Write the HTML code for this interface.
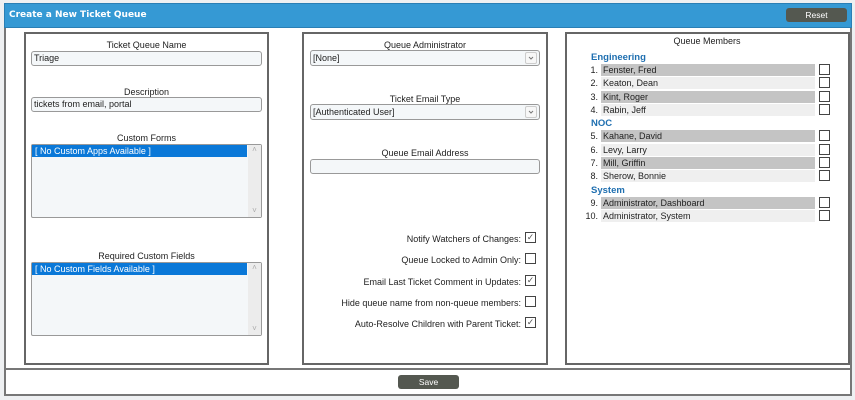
<!DOCTYPE html>
<html><head><style>
*{box-sizing:border-box;margin:0;padding:0}
body{width:855px;height:400px;background:#eef0f2;font-family:"Liberation Sans",sans-serif;font-size:9px;color:#222;position:relative;overflow:hidden}
.a{position:absolute}
#outer{left:4px;top:3px;width:848px;height:393px;border:2px solid #777;background:#fff}
#title{left:4px;top:3px;width:848px;height:25px;background:#3599d4;border:1px solid #2a7fb5}
#title span{position:absolute;left:4px;top:6px;color:#fff;font-weight:bold;font-size:9px;font-family:"DejaVu Sans",sans-serif}
.btn{background:#545850;color:#fff;border-radius:3px;text-align:center;font-size:8.5px;line-height:14px}
.panel{border:2px solid #666;background:#fff}
.lbl{text-align:center;font-size:9px}
.inp{border:1px solid #999;border-radius:3px;background:#f4f7f9;padding-left:2px;line-height:12px;font-size:9px}
.list{border:1px solid #999;border-radius:2px;background:#f4f7f9}
.sel{background:#0a78d8;color:#fff;padding-left:3px;line-height:12px}
.sb{position:absolute;right:0;top:0;bottom:0;width:13px;background:#ececec;color:#aaa;font-size:8px;text-align:center}
.cb{width:11px;height:11px;border:1px solid #444;background:#fff}
.chk{font-size:9px;text-align:right}
.grp{color:#1f6fb0;font-weight:bold;font-size:9.5px}
.row{height:12px;line-height:12px}
.num{text-align:right;width:30px}
.dd{position:absolute;right:2px;top:1px;width:12px;height:12px;border:1px solid #ccc;border-radius:2px;background:#f7f7f7}
</style></head><body>
<div id="outer" class="a"></div>
<div id="title" class="a"><span>Create a New Ticket Queue</span></div>
<div class="a btn" style="left:786px;top:8px;width:61px;height:14px">Reset</div>
<div class="a" style="left:5px;top:368px;width:846px;height:2px;background:#777"></div>
<div class="a btn" style="left:398px;top:375px;width:61px;height:14px">Save</div>

<div class="a panel" style="left:24px;top:32px;width:245px;height:333px"></div>
<div class="a lbl" style="left:31px;top:40px;width:231px">Ticket Queue Name</div>
<div class="a inp" style="left:31px;top:51px;width:231px;height:15px">Triage</div>
<div class="a lbl" style="left:31px;top:87px;width:231px">Description</div>
<div class="a inp" style="left:31px;top:97px;width:231px;height:15px">tickets from email, portal</div>
<div class="a lbl" style="left:31px;top:133px;width:231px">Custom Forms</div>
<div class="a list" style="left:31px;top:144px;width:231px;height:74px"><div class="sel" style="margin-right:14px">[ No Custom Apps Available ]</div><div class="sb">˄<div style="position:absolute;bottom:2px;width:13px">˅</div></div></div>
<div class="a lbl" style="left:31px;top:251px;width:231px">Required Custom Fields</div>
<div class="a list" style="left:31px;top:262px;width:231px;height:74px"><div class="sel" style="margin-right:14px">[ No Custom Fields Available ]</div><div class="sb">˄<div style="position:absolute;bottom:2px;width:13px">˅</div></div></div>

<div class="a panel" style="left:302px;top:32px;width:246px;height:333px"></div>
<div class="a lbl" style="left:310px;top:40px;width:230px">Queue Administrator</div>
<div class="a inp" style="left:310px;top:50px;width:230px;height:16px;line-height:14px">[None]<div class="dd"><svg width="10" height="10" style="position:absolute;left:0;top:0"><path d="M3 4l2 2 2-2" stroke="#777" fill="none"/></svg></div></div>
<div class="a lbl" style="left:310px;top:94px;width:230px">Ticket Email Type</div>
<div class="a inp" style="left:310px;top:104px;width:230px;height:16px;line-height:14px">[Authenticated User]<div class="dd"><svg width="10" height="10" style="position:absolute;left:0;top:0"><path d="M3 4l2 2 2-2" stroke="#777" fill="none"/></svg></div></div>
<div class="a lbl" style="left:310px;top:148px;width:230px">Queue Email Address</div>
<div class="a inp" style="left:310px;top:159px;width:230px;height:15px"></div>
<div class="a chk" style="left:310px;top:234px;width:211px">Notify Watchers of Changes:</div><div class="a cb" style="left:525px;top:232px;font-size:9px;line-height:9px;text-align:center;color:#555">✓</div>
<div class="a chk" style="left:310px;top:255px;width:211px">Queue Locked to Admin Only:</div><div class="a cb" style="left:525px;top:253px"></div>
<div class="a chk" style="left:310px;top:277px;width:211px">Email Last Ticket Comment in Updates:</div><div class="a cb" style="left:525px;top:275px;font-size:9px;line-height:9px;text-align:center;color:#555">✓</div>
<div class="a chk" style="left:310px;top:298px;width:211px">Hide queue name from non-queue members:</div><div class="a cb" style="left:525px;top:296px"></div>
<div class="a chk" style="left:310px;top:319px;width:211px">Auto-Resolve Children with Parent Ticket:</div><div class="a cb" style="left:525px;top:317px;font-size:9px;line-height:9px;text-align:center;color:#555">✓</div>

<div class="a panel" style="left:565px;top:32px;width:285px;height:333px"></div>
<div class="a lbl" style="left:567px;top:36px;width:280px">Queue Members</div>
<div class="a" style="left:568px;top:52px;width:270px;line-height:13.3px">
<div class="grp" style="margin-left:23px;height:12px;line-height:12px">Engineering</div>
<div class="row" style="display:flex;height:13.3px"><div class="num">1.</div><div style="margin-left:3px;width:214px;background:#c4c4c4;padding-left:2px;height:12px">Fenster, Fred</div><div class="cb" style="margin-left:4px"></div></div>
<div class="row" style="display:flex;height:13.3px"><div class="num">2.</div><div style="margin-left:3px;width:214px;background:#efefef;padding-left:2px;height:12px">Keaton, Dean</div><div class="cb" style="margin-left:4px"></div></div>
<div class="row" style="display:flex;height:13.3px"><div class="num">3.</div><div style="margin-left:3px;width:214px;background:#c4c4c4;padding-left:2px;height:12px">Kint, Roger</div><div class="cb" style="margin-left:4px"></div></div>
<div class="row" style="display:flex;height:13.3px"><div class="num">4.</div><div style="margin-left:3px;width:214px;background:#efefef;padding-left:2px;height:12px">Rabin, Jeff</div><div class="cb" style="margin-left:4px"></div></div>
<div class="grp" style="margin-left:23px;height:13.3px">NOC</div>
<div class="row" style="display:flex;height:13.3px"><div class="num">5.</div><div style="margin-left:3px;width:214px;background:#c4c4c4;padding-left:2px;height:12px">Kahane, David</div><div class="cb" style="margin-left:4px"></div></div>
<div class="row" style="display:flex;height:13.3px"><div class="num">6.</div><div style="margin-left:3px;width:214px;background:#efefef;padding-left:2px;height:12px">Levy, Larry</div><div class="cb" style="margin-left:4px"></div></div>
<div class="row" style="display:flex;height:13.3px"><div class="num">7.</div><div style="margin-left:3px;width:214px;background:#c4c4c4;padding-left:2px;height:12px">Mill, Griffin</div><div class="cb" style="margin-left:4px"></div></div>
<div class="row" style="display:flex;height:13.3px"><div class="num">8.</div><div style="margin-left:3px;width:214px;background:#efefef;padding-left:2px;height:12px">Sherow, Bonnie</div><div class="cb" style="margin-left:4px"></div></div>
<div class="grp" style="margin-left:23px;height:13.3px">System</div>
<div class="row" style="display:flex;height:13.3px"><div class="num">9.</div><div style="margin-left:3px;width:214px;background:#c4c4c4;padding-left:2px;height:12px">Administrator, Dashboard</div><div class="cb" style="margin-left:4px"></div></div>
<div class="row" style="display:flex;height:13.3px"><div class="num">10.</div><div style="margin-left:3px;width:214px;background:#efefef;padding-left:2px;height:12px">Administrator, System</div><div class="cb" style="margin-left:4px"></div></div>
</div>
</body></html>
